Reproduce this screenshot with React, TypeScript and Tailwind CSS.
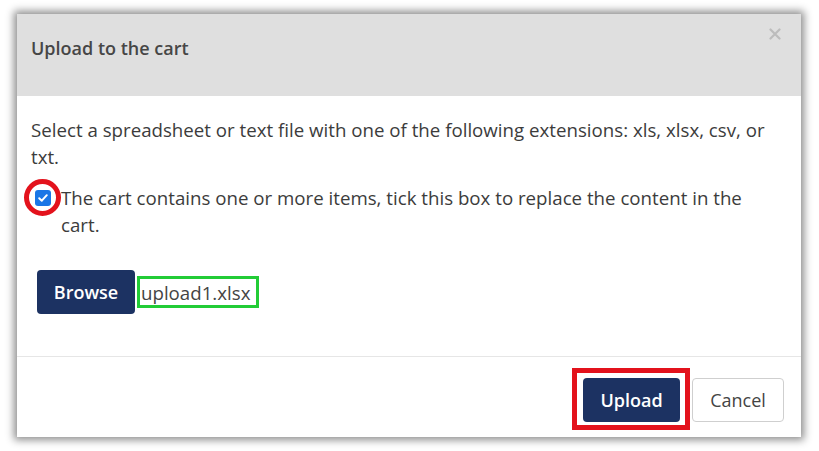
import React from "react";

export default function App() {
  return (
    <div
      className="w-[819px] h-[451px] bg-white pt-[14px] pl-[17px]"
      style={{ fontFamily: '"Open Sans", "Noto Sans", sans-serif' }}
    >
      <div className="w-[784px] h-[423px] bg-white flex flex-col shadow-[0_0_8px_3px_rgba(0,0,0,0.45)]">
        {/* Header */}
        <div className="h-[82px] bg-[#dfdfdf] flex items-start justify-between pl-[14px] pr-[20px] pt-[22px] shrink-0">
          <h1 className="text-[18px] leading-[24px] font-semibold text-[#464646]">Upload to the cart</h1>
          <svg width="12" height="12" viewBox="0 0 12 12" className="mt-[-8px]">
            <path d="M1.5 1.5 L10.5 10.5 M10.5 1.5 L1.5 10.5" stroke="#bcbcbc" strokeWidth="2.2" strokeLinecap="round" />
          </svg>
        </div>
        {/* Body */}
        <div className="px-[14px] pt-[20px] text-[#3c3c3c] text-[18.7px] leading-[27px] flex flex-col">
          <p>Select a spreadsheet or text file with one of the following extensions: xls, xlsx, csv, or txt.</p>
          <div className="flex items-start mt-[14px] pr-[24px]">
            <div className="relative w-[30px] h-[27px] shrink-0 flex items-center pl-[4px]">
              <span className="w-[16px] h-[16px] rounded-[3px] bg-[#1a76e6] flex items-center justify-center">
                <svg width="12" height="12" viewBox="0 0 12 12">
                  <path d="M2.2 6.2 L4.8 8.7 L9.8 3.2" fill="none" stroke="white" strokeWidth="2" strokeLinecap="round" strokeLinejoin="round" />
                </svg>
              </span>
              <span className="absolute left-[-7px] top-[-5px] w-[37px] h-[37px] rounded-full border-[5px] border-[#e3121c]" />
            </div>
            <p>The cart contains one or more items, tick this box to replace the content in the cart.</p>
          </div>
          <div className="flex items-center mt-[32px] pl-[6px]">
            <button className="w-[98px] h-[44px] rounded-[4px] bg-[#1c3262] text-white text-[18px] font-semibold">Browse</button>
            <span className="ml-[2px] h-[32px] pl-[1px] pr-[6px] border-[3px] border-[#22cc36] flex items-center text-[18.7px] text-[#444]">upload1.xlsx</span>
          </div>
        </div>
        {/* Footer */}
        <div className="mt-auto border-t border-[#e6e6e6] h-[81px] flex items-start justify-end gap-[12px] pr-[17px] pt-[21px] shrink-0">
          <div className="relative">
            <button className="w-[97px] h-[44px] rounded-[4px] bg-[#1c3262] text-white text-[18px] font-semibold">Upload</button>
            <span className="absolute -left-[11px] -right-[10px] -top-[10px] -bottom-[8px] border-[5px] border-[#e3121c]" />
          </div>
          <button className="w-[92px] h-[44px] rounded-[4px] border border-[#cfcfcf] bg-white text-[#444] text-[18px]">Cancel</button>
        </div>
      </div>
    </div>
  );
}
